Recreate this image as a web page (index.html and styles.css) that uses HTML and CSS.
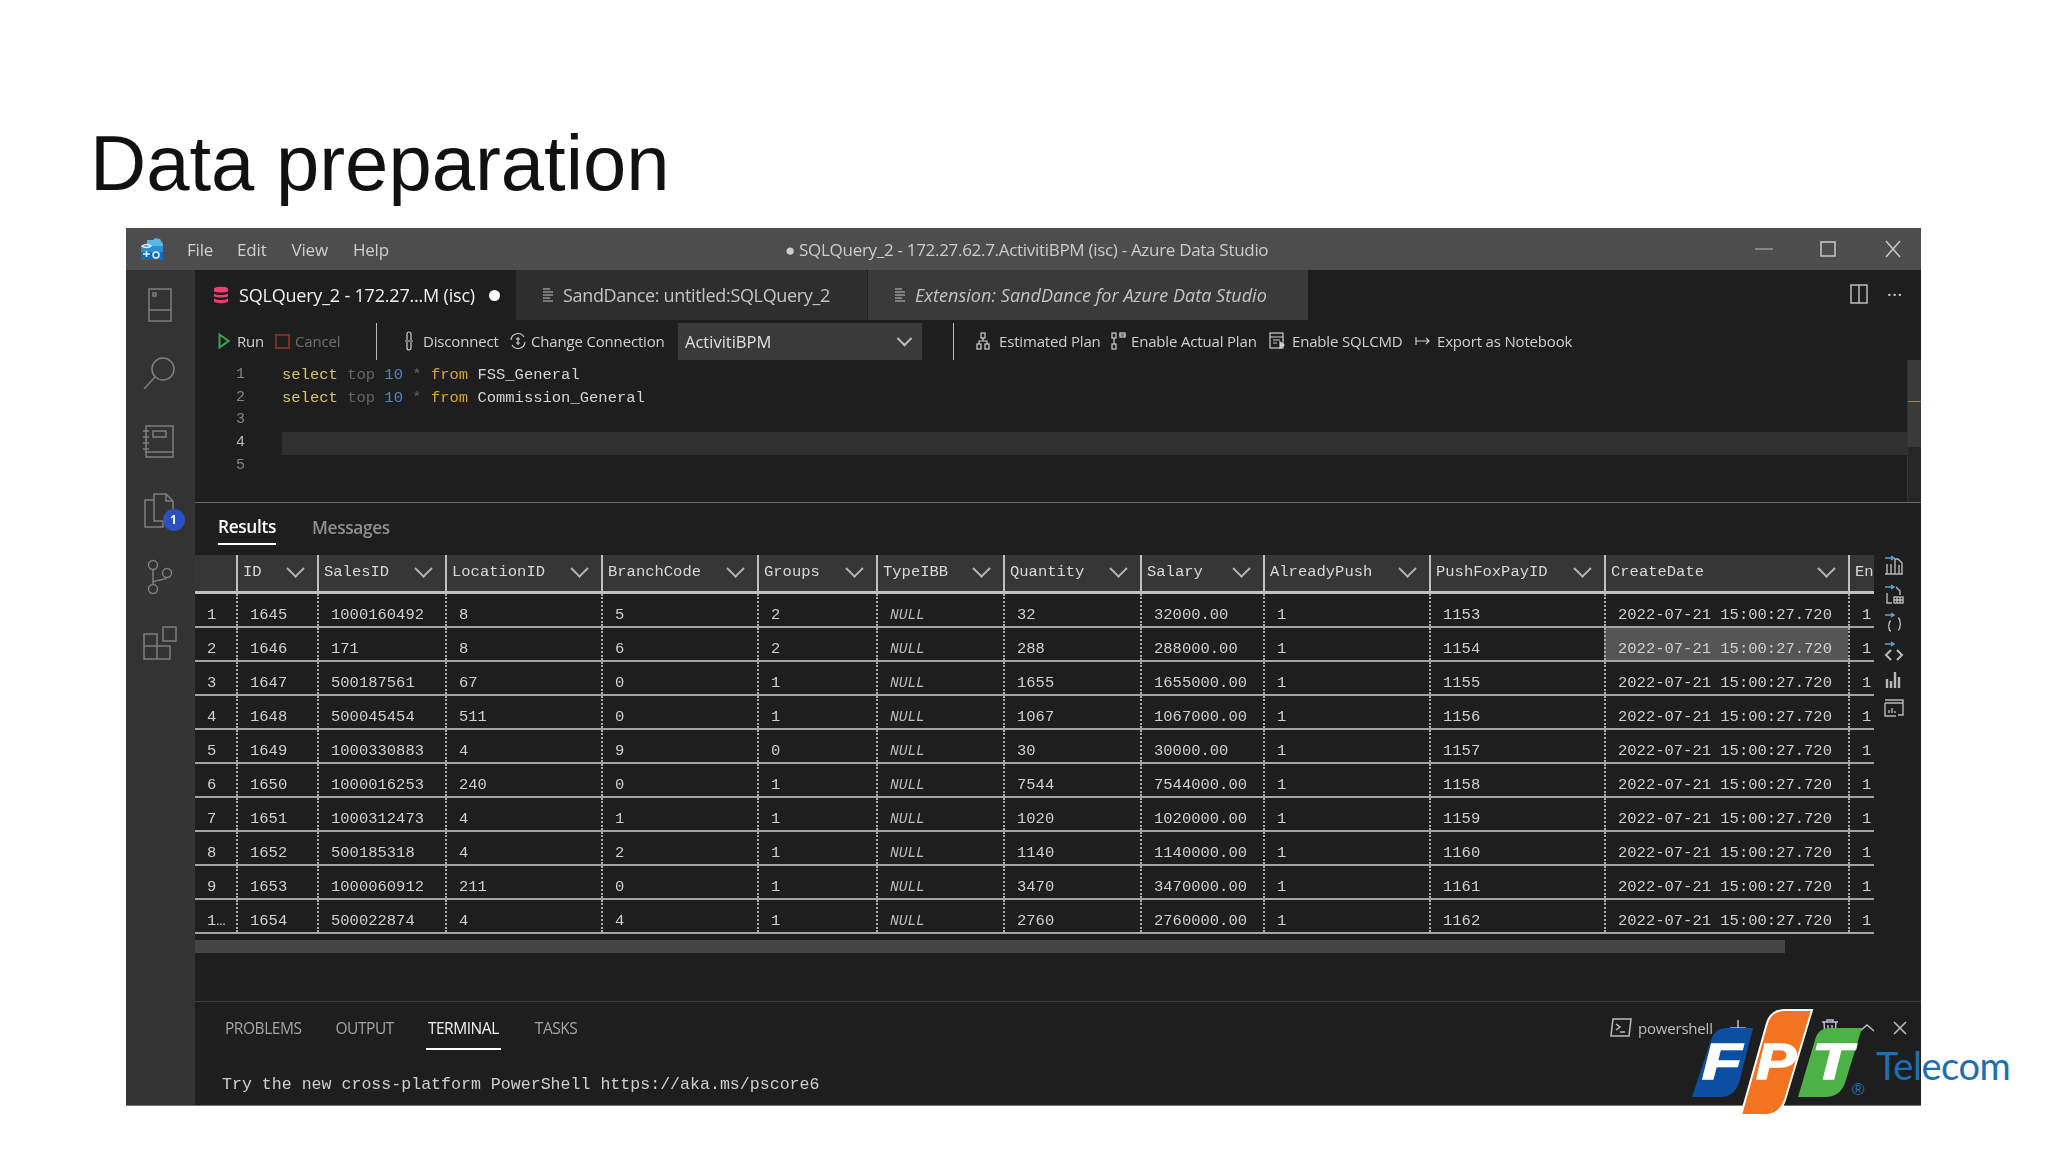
FILE: index.html
```html
<!DOCTYPE html>
<html lang="en">
<head>
<meta charset="utf-8">
<title>Data preparation</title>
<link rel="stylesheet" href="styles.css">
</head>
<body>
<div class="slide">
  <h1 class="slide-title">Data preparation</h1>
  <div class="window">
    <header class="titlebar">
      <div class="menu">
        <svg class="app-logo" viewBox="0 0 24 24" width="24" height="24"><path d="M7 3h6l2-2 5 1 3 5v4H7z" fill="#5ab4e8"/><path d="M1 9h22v6H1z" fill="#2d8fd4"/><path d="M1 15h22v8H1z" fill="#0f6cbd"/><path d="M2 9c3-2 7-2 9 0-2 2-7 2-9 0z" fill="none" stroke="#e8f4fc" stroke-width="1.4"/><path d="M3 17h7M6.500 14v6" stroke="#e8f4fc" stroke-width="1.500"/><circle cx="16" cy="18" r="3" fill="none" stroke="#e8f4fc" stroke-width="1.500"/></svg>
        <span class="menu-item m-file">File</span>
        <span class="menu-item m-edit">Edit</span>
        <span class="menu-item m-view">View</span>
        <span class="menu-item m-help">Help</span>
      </div>
      <div class="win-title">● SQLQuery_2 - 172.27.62.7.ActivitiBPM (isc) - Azure Data Studio</div>
      <div class="win-controls">
        <svg class="ico win-min" viewBox="0 0 18 18" width="18" height="18"><path d="M0 9h18"/></svg>
        <svg class="ico win-max" viewBox="0 0 18 18" width="18" height="18"><rect x="2" y="2" width="14" height="14"/></svg>
        <svg class="ico win-close" viewBox="0 0 18 18" width="18" height="18"><path d="M2 1l14 16M16 1L2 17"/></svg>
      </div>
    </header>
    <div class="workbench">
      <nav class="activity">
        <svg class="ico act a1" viewBox="0 0 24 34" width="24" height="34"><rect x="1" y="1" width="22" height="32"/><path d="M1 22h22"/><rect x="5" y="5" width="3" height="3"/></svg>
        <svg class="ico act a2" viewBox="0 0 34 34" width="34" height="34"><circle cx="21" cy="13" r="11"/><path d="M13 21L2 33"/></svg>
        <svg class="ico act a3" viewBox="0 0 34 36" width="34" height="36"><path d="M4 3h27v31H4z"/><path d="M4 29h27"/><rect x="11" y="8" width="13" height="6"/><path d="M1 8h6M1 14h6M1 20h6M1 26h6"/></svg>
        <div class="act-badge-wrap">
          <svg class="ico" viewBox="0 0 32 36" width="32" height="36"><path d="M11 8H2v27h18v-6"/><path d="M11 2h12l7 7v20H11z"/><path d="M23 2v7h7"/></svg>
          <span class="badge">1</span>
        </div>
        <svg class="ico act a5" viewBox="0 0 26 36" width="26" height="36"><circle cx="6" cy="6" r="4.500"/><circle cx="6" cy="30" r="4.500"/><circle cx="20" cy="14" r="4.500"/><path d="M6 10.500v15M6 24c0-4 14-2 14-6"/></svg>
        <svg class="ico act a6" viewBox="0 0 34 34" width="34" height="34"><path d="M1 8h13v25H1zM1 20h26v13H14"/><rect x="20" y="1" width="13" height="14"/></svg>
      </nav>
      <main class="main">
        <div class="tabs">
          <div class="tab tab-active">
            <svg class="tab-db" viewBox="0 0 16 20" width="16" height="20"><path d="M1 4c0-3 14-3 14 0v2c0 2-14 2-14 0zM1 8.500c3 2 11 2 14 0V11c0 2-14 2-14 0zM1 13.500c3 2 11 2 14 0V16c0 3-14 3-14 0z" fill="#ef3f72"/></svg>
            <span>SQLQuery_2 - 172.27...M (isc)</span>
            <span class="dirty"></span>
          </div>
          <div class="tab tab-second">
            <svg class="tab-doc ico" viewBox="0 0 12 14" width="12" height="14"><path d="M1 1h7M1 4h10M1 7h10M1 10h7M1 13h10"/></svg>
            <span>SandDance: untitled:SQLQuery_2</span>
          </div>
          <div class="tab tab-third">
            <svg class="tab-doc ico" viewBox="0 0 12 14" width="12" height="14"><path d="M1 1h7M1 4h10M1 7h10M1 10h7M1 13h10"/></svg>
            <em>Extension: SandDance for Azure Data Studio</em>
          </div>
          <div class="tab-actions">
            <svg class="ico" viewBox="0 0 20 20" width="20" height="20"><rect x="2" y="1" width="16" height="18"/><path d="M10 1v18"/></svg>
            <span class="dots">···</span>
          </div>
        </div>
        <div class="toolbar">
          <svg class="t-run" viewBox="0 0 12 16" width="12" height="16"><path d="M1.500 1.500L10.500 8l-9 6.500z" fill="none" stroke="#3fa34a" stroke-width="2"/></svg>
          <span class="t-label l-run">Run</span>
          <span class="t-cancel"></span>
          <span class="t-label l-cancel">Cancel</span>
          <span class="t-sep s1"></span>
          <svg class="ico t-disc" viewBox="0 0 10 20" width="10" height="20"><path d="M3 9V3a2 2 0 0 1 4 0v6M3 11v6a2 2 0 0 0 4 0v-6M1 10h8"/></svg>
          <span class="t-label l-disc">Disconnect</span>
          <svg class="ico t-chg" viewBox="0 0 18 18" width="18" height="18"><path d="M2 8a7 7 0 0 1 13-3M16 10a7 7 0 0 1-13 3"/><path d="M9 5v8M7 7h4M7 11h4"/></svg>
          <span class="t-label l-chg">Change Connection</span>
          <div class="db-select"><span>ActivitiBPM</span><i class="chev"></i></div>
          <span class="t-sep s2"></span>
          <svg class="ico t-est" viewBox="0 0 14 18" width="14" height="18"><rect x="5" y="1" width="4" height="5"/><rect x="1" y="12" width="4" height="5"/><rect x="9" y="12" width="4" height="5"/><path d="M7 6v3M3 12V9h8v3"/></svg>
          <span class="t-label l-est">Estimated Plan</span>
          <svg class="ico t-act" viewBox="0 0 16 18" width="16" height="18"><rect x="1" y="1" width="4" height="5"/><rect x="1" y="12" width="4" height="5"/><path d="M3 6v6M8 3h7"/><rect x="9" y="1" width="5" height="4"/></svg>
          <span class="t-label l-act">Enable Actual Plan</span>
          <svg class="ico t-cmd" viewBox="0 0 16 18" width="16" height="18"><rect x="1" y="1" width="13" height="15"/><path d="M1 5h13M4 8h7M4 11h4"/><path d="M11 10l4 3-4 3z" fill="#d4d4d4"/></svg>
          <span class="t-label l-cmd">Enable SQLCMD</span>
          <svg class="ico t-exp" viewBox="0 0 16 12" width="16" height="12"><path d="M1 2v8M1 6h13M11 3l3 3-3 3"/></svg>
          <span class="t-label l-exp">Export as Notebook</span>
        </div>
        <div class="editor">
          <div class="gutter"><span>1</span><span>2</span><span>3</span><span class="cur">4</span><span>5</span></div>
          <div class="code">
            <div class="cl"><b class="k">select</b> <b class="g">top</b> <b class="n">10</b> <b class="g">*</b> <b class="f">from</b> FSS_General</div>
            <div class="cl"><b class="k">select</b> <b class="g">top</b> <b class="n">10</b> <b class="g">*</b> <b class="f">from</b> Commission_General</div>
            <div class="cl"></div>
            <div class="cl cl-cur"></div>
            <div class="cl"></div>
          </div>
          <div class="overview"><span class="ov-mark"></span></div>
        </div>
        <div class="result-tabs">
          <span class="rt rt-on">Results</span>
          <span class="rt">Messages</span>
        </div>
        <div class="results">
          <div class="grid">
            <div class="row head">
              <div class="th th0"></div><div class="th">ID</div><div class="th">SalesID</div><div class="th">LocationID</div><div class="th">BranchCode</div><div class="th">Groups</div><div class="th">TypeIBB</div><div class="th">Quantity</div><div class="th">Salary</div><div class="th">AlreadyPush</div><div class="th">PushFoxPayID</div><div class="th">CreateDate</div><div class="th th-last">En</div>
            </div>
            <div class="row"><div class="td td0">1</div><div class="td">1645</div><div class="td">1000160492</div><div class="td">8</div><div class="td">5</div><div class="td">2</div><div class="td nul">NULL</div><div class="td">32</div><div class="td">32000.00</div><div class="td">1</div><div class="td">1153</div><div class="td">2022-07-21 15:00:27.720</div><div class="td">1</div></div>
            <div class="row"><div class="td td0">2</div><div class="td">1646</div><div class="td">171</div><div class="td">8</div><div class="td">6</div><div class="td">2</div><div class="td nul">NULL</div><div class="td">288</div><div class="td">288000.00</div><div class="td">1</div><div class="td">1154</div><div class="td sel">2022-07-21 15:00:27.720</div><div class="td">1</div></div>
            <div class="row"><div class="td td0">3</div><div class="td">1647</div><div class="td">500187561</div><div class="td">67</div><div class="td">0</div><div class="td">1</div><div class="td nul">NULL</div><div class="td">1655</div><div class="td">1655000.00</div><div class="td">1</div><div class="td">1155</div><div class="td">2022-07-21 15:00:27.720</div><div class="td">1</div></div>
            <div class="row"><div class="td td0">4</div><div class="td">1648</div><div class="td">500045454</div><div class="td">511</div><div class="td">0</div><div class="td">1</div><div class="td nul">NULL</div><div class="td">1067</div><div class="td">1067000.00</div><div class="td">1</div><div class="td">1156</div><div class="td">2022-07-21 15:00:27.720</div><div class="td">1</div></div>
            <div class="row"><div class="td td0">5</div><div class="td">1649</div><div class="td">1000330883</div><div class="td">4</div><div class="td">9</div><div class="td">0</div><div class="td nul">NULL</div><div class="td">30</div><div class="td">30000.00</div><div class="td">1</div><div class="td">1157</div><div class="td">2022-07-21 15:00:27.720</div><div class="td">1</div></div>
            <div class="row"><div class="td td0">6</div><div class="td">1650</div><div class="td">1000016253</div><div class="td">240</div><div class="td">0</div><div class="td">1</div><div class="td nul">NULL</div><div class="td">7544</div><div class="td">7544000.00</div><div class="td">1</div><div class="td">1158</div><div class="td">2022-07-21 15:00:27.720</div><div class="td">1</div></div>
            <div class="row"><div class="td td0">7</div><div class="td">1651</div><div class="td">1000312473</div><div class="td">4</div><div class="td">1</div><div class="td">1</div><div class="td nul">NULL</div><div class="td">1020</div><div class="td">1020000.00</div><div class="td">1</div><div class="td">1159</div><div class="td">2022-07-21 15:00:27.720</div><div class="td">1</div></div>
            <div class="row"><div class="td td0">8</div><div class="td">1652</div><div class="td">500185318</div><div class="td">4</div><div class="td">2</div><div class="td">1</div><div class="td nul">NULL</div><div class="td">1140</div><div class="td">1140000.00</div><div class="td">1</div><div class="td">1160</div><div class="td">2022-07-21 15:00:27.720</div><div class="td">1</div></div>
            <div class="row"><div class="td td0">9</div><div class="td">1653</div><div class="td">1000060912</div><div class="td">211</div><div class="td">0</div><div class="td">1</div><div class="td nul">NULL</div><div class="td">3470</div><div class="td">3470000.00</div><div class="td">1</div><div class="td">1161</div><div class="td">2022-07-21 15:00:27.720</div><div class="td">1</div></div>
            <div class="row"><div class="td td0">1…</div><div class="td">1654</div><div class="td">500022874</div><div class="td">4</div><div class="td">4</div><div class="td">1</div><div class="td nul">NULL</div><div class="td">2760</div><div class="td">2760000.00</div><div class="td">1</div><div class="td">1162</div><div class="td">2022-07-21 15:00:27.720</div><div class="td">1</div></div>
          </div>
          <div class="rail">
            <svg class="ico" viewBox="0 0 20 20" width="20" height="20"><path d="M1 3h9M7 1l3 2-3 2" stroke="#4ea6e6"/><path d="M3 19V9M7 19V9M11 19V4h3l4 4v11M1 19h18M15 10v9"/></svg>
            <svg class="ico" viewBox="0 0 20 20" width="20" height="20"><path d="M1 3h9M7 1l3 2-3 2" stroke="#4ea6e6"/><path d="M12 3l4 4v4M3 9v10h5"/><rect x="10" y="13" width="9" height="6"/><path d="M13 13v6M16 13v6M10 16h9"/></svg>
            <svg class="ico" viewBox="0 0 20 20" width="20" height="20"><path d="M1 3h9M7 1l3 2-3 2" stroke="#4ea6e6"/><path d="M7 9c-3 0-1 5-3 5 2 0 0 5 3 5M14 6c3 0 1 6 3 6-2 0 0 6-3 6"/></svg>
            <svg class="ico" viewBox="0 0 20 20" width="20" height="20"><path d="M1 3h9M7 1l3 2-3 2" stroke="#4ea6e6"/><path d="M7 9l-5 5 5 5M13 9l5 5-5 5" stroke-width="2"/></svg>
            <svg class="ico" viewBox="0 0 20 20" width="20" height="20"><path d="M3 19V10M7 19V12M11 19V3M15 19V8" stroke-width="2.400"/></svg>
            <svg class="ico" viewBox="0 0 20 20" width="20" height="20"><path d="M1 2h18v15h-5M1 5h18M1 5v13h11"/><path d="M5 15v-3M8 15v-5M11 15v-2"/></svg>
          </div>
        </div>
        <div class="hscroll"></div>
        <section class="panel">
          <div class="panel-head">
            <span class="pt pt1">PROBLEMS</span>
            <span class="pt pt2">OUTPUT</span>
            <span class="pt pt3">TERMINAL</span>
            <span class="pt pt4">TASKS</span>
            <div class="panel-actions">
              <svg class="ico" viewBox="0 0 22 20" width="22" height="20"><path d="M3 1h18l-2 17H1z"/><path d="M6 6l4 3-4 3M10 14h5"/></svg>
              <span class="ps">powershell</span>
              <svg class="ico p-plus" viewBox="0 0 18 18" width="18" height="18"><path d="M9 1v16M1 9h16"/></svg>
              <svg class="ico p-trash" viewBox="0 0 18 18" width="18" height="18"><path d="M1 3h16M6 3V1h6v2M3 3l1 14h10l1-14M7 6v8M11 6v8" stroke="#c9b6d8"/></svg>
              <svg class="ico p-up" viewBox="0 0 16 10" width="16" height="10"><path d="M1 8l7-6 7 6"/></svg>
              <svg class="ico p-x" viewBox="0 0 14 14" width="14" height="14"><path d="M1 1l12 12M13 1L1 13"/></svg>
            </div>
          </div>
          <div class="terminal">Try the new cross-platform PowerShell https://aka.ms/pscore6</div>
        </section>
      </main>
    </div>
  </div>
  <div class="brand">
    <svg viewBox="0 0 180 110" width="180" height="110">
      <path d="M63 20H36Q25 20 21 32L2 89H30Q44 89 49 75Z" fill="#0b4ea2"/>
      <path d="M172 20H140Q128 20 125 32L108 89H135Q150 89 155 75Z" fill="#4cb147"/>
      <path d="M122 2H95Q81 2 77 15L51 107H75Q90 107 95 92Z" fill="#f37321" stroke="#fff" stroke-width="2"/>
      <text class="logo-letter" x="12" y="71" textLength="40" lengthAdjust="spacingAndGlyphs">F</text>
      <text class="logo-letter" x="66" y="71" textLength="40" lengthAdjust="spacingAndGlyphs">P</text>
      <text class="logo-letter" x="122" y="71" textLength="40" lengthAdjust="spacingAndGlyphs">T</text>
    </svg>
    <span class="reg">®</span>
    <span class="telecom">Telecom</span>
  </div>
</div>
</body>
</html>
```

FILE: styles.css
```css
* { box-sizing: border-box; }
html, body { margin: 0; padding: 0; background: #fff; }
.slide { position: relative; width: 2048px; height: 1152px; overflow: hidden; background: #fff; }
.slide-title {
  margin: 0; height: 228px; padding: 118px 0 0 90px;
  font: 400 77.8px/90px "Liberation Sans", Arial, sans-serif; color: #111;
}
.window {
  margin-left: 126px; width: 1795px; height: 878px; display: flex; flex-direction: column;
  background: #1e1e1e; color: #d4d4d4; font-family: "Open Sans", sans-serif; overflow: hidden;
  border-bottom: 1px solid #777; filter: blur(.35px);
}
.ico { fill: none; stroke: currentColor; stroke-width: 1.5; flex: none; }

/* title bar */
.titlebar {
  height: 42px; flex: none; background: #4d4d4d; display: grid;
  grid-template-columns: 659px 482px 1fr; align-items: center; font-size: 17px; color: #cfcfcf;
}
.menu { display: flex; align-items: center; padding-left: 14px; }
.app-logo { flex: none; }
.menu-item { letter-spacing: -.2px; }
.m-file { margin-left: 23px; }
.m-edit { margin-left: 24px; }
.m-view { margin-left: 25px; }
.m-help { margin-left: 25px; }
.win-title { font-size: 17px; letter-spacing: -.3px; white-space: nowrap; color: #cccccc; }
.win-controls { display: flex; align-items: center; color: #c8c8c8; padding-left: 488px; }
.win-min { color: #999; }
.win-max { margin-left: 46px; }
.win-close { margin-left: 47px; }

.workbench { flex: 1; display: flex; min-height: 0; }
.activity {
  width: 69px; flex: none; background: #333; color: #7f7f7f; display: flex; flex-direction: column;
  align-items: center; padding-top: 18px;
}
.a1 { margin-left: -2px; }
.a2 { margin-top: 34px; margin-left: -4px; }
.a3 { margin-top: 33px; margin-left: -4px; }
.act-badge-wrap { position: relative; height: 36px; margin-top: 33px; margin-left: -4px; }
.act-badge-wrap .ico { display: block; }
.badge {
  position: absolute; left: 20px; top: 17px; width: 22px; height: 22px; border-radius: 50%;
  background: #2b51c0; color: #fff; font-size: 12px; font-weight: 700; line-height: 22px; text-align: center;
}
.a5 { margin-top: 31px; margin-left: -2px; }
.a6 { margin-top: 31px; margin-left: -2px; }

.main { flex: 1; min-width: 0; display: flex; flex-direction: column; }
.tabs { height: 50px; flex: none; display: flex; background: #1e1e1e; }
.tab { display: flex; align-items: center; height: 50px; font-size: 18px; white-space: nowrap; }
.tab-active { width: 321px; padding-left: 18px; color: #f0f0f0; letter-spacing: -.2px; }
.tab-active span:nth-child(2) { margin-left: 10px; }
.dirty { width: 11px; height: 11px; border-radius: 50%; background: #fff; margin-left: 14px; flex: none; }
.tab-second { width: 352px; padding-left: 26px; background: #2e2e2e; color: #c4c4c4; border-right: 1px solid #222; letter-spacing: -.33px; }
.tab-third { width: 440px; padding-left: 26px; background: #3a3a3a; color: #c4c4c4; letter-spacing: .05px; }
.tab-doc { margin-right: 9px; stroke-width: 1.2; }
.tab-actions { margin-left: auto; display: flex; align-items: center; padding-right: 18px; color: #bdbdbd; gap: 18px; height: 50px; padding-bottom: 2px; }
.dots { font-size: 15px; font-weight: 700; letter-spacing: 1px; }

/* query toolbar */
.toolbar { height: 40px; flex: none; display: flex; align-items: center; font-size: 15px; letter-spacing: -.17px; color: #cfcfcf; padding-top: 2px; }
.t-label { white-space: nowrap; }
.toolbar svg { flex: none; stroke-width: 1.2; }
.t-run { margin-left: 23px; }
.l-run { margin-left: 7px; width: 38px; }
.t-cancel { width: 15px; height: 15px; border: 2px solid #7a2f25; flex: none; }
.l-cancel { margin-left: 5px; width: 47px; color: #6e6e6e; }
.t-sep { width: 1px; height: 37px; background: #bbb; flex: none; }
.s1 { margin-left: 34px; }
.t-disc { margin-left: 27px; }
.l-disc { margin-left: 9px; width: 76px; }
.t-chg { margin-left: 10px; }
.l-chg { margin-left: 4px; width: 136px; }
.db-select {
  margin-left: 11px; width: 244px; height: 37px; background: #3a3a3a; display: flex; align-items: center;
  justify-content: space-between; padding: 0 12px 0 7px; font-size: 16.5px; letter-spacing: 0; color: #e0e0e0;
}
.chev { display: block; width: 11px; height: 11px; border: solid #bbb; border-width: 0 2px 2px 0; transform: rotate(45deg) translate(-2px, -2px); flex: none; }
.s2 { margin-left: 31px; }
.t-est { margin-left: 22px; }
.l-est { margin-left: 9px; width: 102px; }
.t-act { margin-left: 10px; }
.l-act { margin-left: 4px; width: 127px; }
.t-cmd { margin-left: 11px; }
.l-cmd { margin-left: 7px; width: 112px; }
.t-exp { margin-left: 11px; }
.l-exp { margin-left: 6px; }

/* editor */
.editor { height: 143px; flex: none; display: flex; position: relative; font: 15.5px/22.7px "Liberation Mono", monospace; border-bottom: 1px solid #6a6a6a; padding-top: 4px; }
.gutter { width: 87px; flex: none; color: #858585; display: flex; flex-direction: column; align-items: flex-end; padding-right: 37px; font-size: 15px; }
.gutter .cur { color: #bbb; }
.gutter span { height: 22.7px; }
.code { flex: 1; color: #d4d4d4; }
.cl { height: 22.7px; white-space: pre; }
.cl-cur { background: #303030; }
.k { font-weight: 400; color: #dcc464; }
.g { font-weight: 400; color: #666; }
.n { font-weight: 400; color: #4f86c6; }
.f { font-weight: 400; color: #d9a52e; }
.overview { width: 14px; flex: none; margin-top: -4px; background: linear-gradient(#3a3a3a 0 87px, #262626 87px); border-left: 1px solid #333; position: relative; }
.ov-mark { position: absolute; left: 0; right: 0; top: 41px; height: 1px; background: #b97a3c; }

/* results */
.result-tabs { height: 52px; flex: none; display: flex; padding-left: 23px; gap: 36px; }
.rt { font-size: 17.3px; letter-spacing: -.35px; height: 42px; line-height: 50px; color: #8f8f8f; font-weight: 600; }
.rt-on { color: #fff; border-bottom: 2px solid #fff; line-height: 48px; }
.results { display: flex; flex: none; }
.grid { width: 1679px; flex: none; font: 15.5px "Liberation Mono", monospace; color: #d0d0d0; }
.row {
  display: grid; height: 34px; border-bottom: 2px solid #a4a4a4;
  grid-template-columns: 41px 81px 128px 156px 156px 119px 127px 137px 123px 166px 175px 244px 26px;
}
.head { height: 39px; border-bottom: 3px solid #c0c0c0; background: #363636; color: #d8d8d8; }
.th { display: flex; align-items: center; justify-content: space-between; padding: 0 15px 3px 5px; border-left: 2px solid #c0c0c0; overflow: hidden; }
.th::after { content: ""; width: 11px; height: 11px; border: solid #b5b5b5; border-width: 0 2px 2px 0; transform: rotate(45deg) translate(-2px, -2px); flex: none; }
.th0 { border-left: 0; padding: 0; }
.th0::after, .th-last::after { display: none; }
.th-last { padding: 0 0 3px 5px; overflow: hidden; white-space: nowrap; }
.td { display: flex; align-items: center; padding: 9px 0 0 12px; border-left: 2px dotted #aaa; white-space: nowrap; overflow: hidden; }
.td0 { border-left: 0; padding-left: 12px; }
.nul { font-style: italic; font-size: 14.5px; color: #bcbcbc; }
.sel { background: #555; }
.rail { display: flex; flex-direction: column; align-items: center; gap: 8.5px; padding: 0 6px 0 3px; width: 42px; color: #b8b8b8; }
.rail .ico { stroke-width: 1.4; }
.hscroll { width: 1590px; height: 13px; margin-top: 6px; flex: none; background: #444; }

/* panel */
.panel { margin-top: 48px; flex: 1; border-top: 1px solid #3e3e3e; min-height: 0; }
.panel-head { height: 48px; display: flex; align-items: flex-start; font-size: 15.5px; letter-spacing: -.45px; color: #a4a4a4; position: relative; }
.pt { display: block; height: 48px; padding-top: 16px; line-height: 20px; }
.pt1 { margin-left: 30px; }
.pt2 { margin-left: 34px; }
.pt3 { margin-left: 32px; padding-left: 2px; padding-right: 2px; color: #f0f0f0; border-bottom: 2px solid #fff; }
.pt4 { margin-left: 34px; }
.panel-actions { position: absolute; left: 1415px; top: 15px; display: flex; align-items: center; height: 22px; color: #bdbdbd; }
.ps { margin-left: 6px; font-size: 15px; letter-spacing: -.2px; width: 74px; }
.p-plus { margin-left: 17px; }
.p-trash { margin-left: 74px; }
.p-up { margin-left: 20px; }
.p-x { margin-left: 18px; }
.terminal { padding: 25px 0 0 27px; font: 16.6px/20px "Liberation Mono", monospace; color: #cfcfcf; white-space: pre; }

/* brand (sits over the window corner) */
.brand { position: absolute; left: 1690px; top: 1008px; width: 340px; height: 112px; }
.brand svg { display: block; }
.logo-letter { font: italic 700 50px "Liberation Sans", sans-serif; fill: #fff; stroke: #fff; stroke-width: 1.5; }
.reg { position: absolute; left: 162px; top: 72px; font: 17px "Liberation Sans", sans-serif; color: #1e6fb8; }
.telecom { position: absolute; left: 186px; top: 34px; font: 400 38px/46px "Lato", sans-serif; letter-spacing: -.45px; color: #1b6fb5; }
```
